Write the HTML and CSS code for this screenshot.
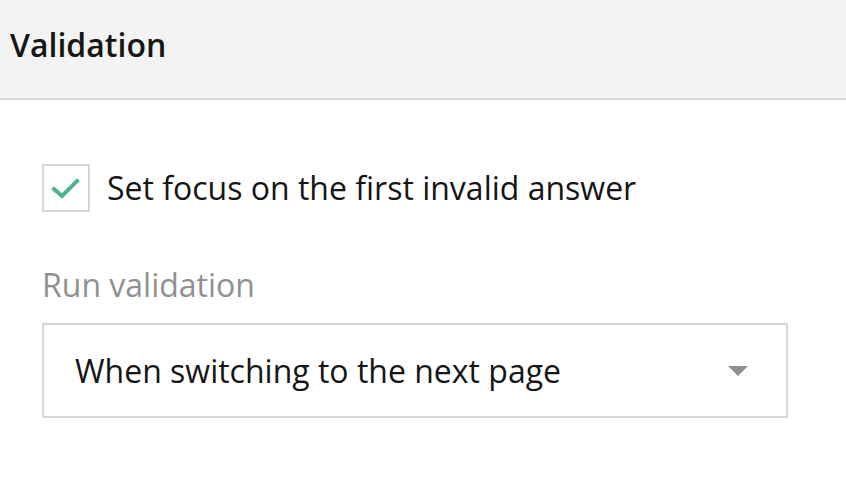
FILE: index.html
```html
<!DOCTYPE html>
<html lang="en">

<head>
  <meta charset="UTF-8">
  <meta name="viewport" content="width=device-width, initial-scale=1.0">
  <title>Validation</title>
  <link rel="stylesheet" href="styles.css">
</head>

<body>
  <div class="panel">
    <div class="panel-header">
      <h2 class="panel-title">Validation</h2>
    </div>

    <div class="panel-body">
      <label class="check-row">
        <span class="check-box">
          <svg width="30" height="24" viewBox="0 0 30 24">
            <polyline points="3,13 11,20 26,5" fill="none" stroke="#4cb38c" stroke-width="4" stroke-linecap="square"/>
          </svg>
        </span>
        <span class="check-label">Set focus on the first invalid answer</span>
      </label>

      <div class="field">
        <div class="field-title">Run validation</div>
        <div class="select">
          <span class="select-value">When switching to the next page</span>
          <span class="select-arrow"></span>
        </div>
      </div>
    </div>
  </div>
</body>

</html>
```

FILE: styles.css
```css
body {
  margin: 0;
  background-color: #fff;
  font-family: "Open Sans", "Liberation Sans", sans-serif;
  color: #161616;
}

.panel-header {
  height: 100px;
  box-sizing: border-box;
  background-color: #f3f3f3;
  border-bottom: 2px solid #d6d6d6;
  display: flex;
  align-items: center;
  padding-left: 10px;
  padding-bottom: 8px;
}

.panel-title {
  margin: 0;
  font-size: 32px;
  font-weight: 600;
  line-height: 1;
}

.panel-body {
  padding: 64px 58px 0 42px;
}

.check-row {
  display: flex;
  align-items: center;
  gap: 17px;
}

.check-box {
  width: 44px;
  height: 44px;
  border: 2px solid #d6d6d6;
  display: flex;
  align-items: center;
  justify-content: center;
}

.check-label {
  font-size: 32px;
  line-height: 1;
}

.field {
  margin-top: 57px;
}

.field-title {
  font-size: 32px;
  line-height: 1;
  color: #909090;
  margin-bottom: 22px;
}

.select {
  height: 91px;
  border: 2px solid #d6d6d6;
  display: flex;
  align-items: center;
  justify-content: space-between;
  padding: 0 38px 0 31px;
}

.select-value {
  font-size: 32px;
}

.select-arrow {
  width: 0;
  height: 0;
  border-left: 10px solid transparent;
  border-right: 10px solid transparent;
  border-top: 10px solid #909090;
}
```
